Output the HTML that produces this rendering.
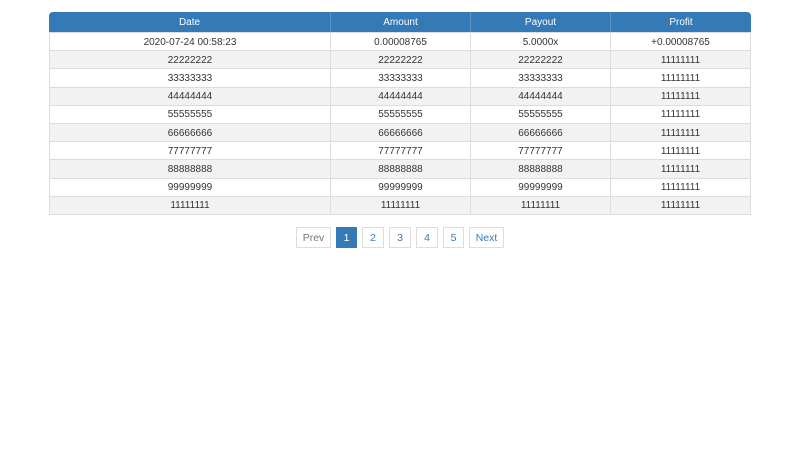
<!DOCTYPE html>
<html><head><style>
body{margin:0;background:#fff;font-family:"Liberation Sans",sans-serif;font-size:10px;color:#333}
table{position:absolute;left:49px;top:12px;width:702px;border-collapse:separate;border-spacing:0;table-layout:fixed}
th{background:#337ab7;color:#fff;font-weight:normal;height:20px;padding:1px 0 0;box-sizing:border-box;border-left:1px solid #5b93c5}
th:first-child{border-left:none;border-top-left-radius:4px}
th:last-child{border-top-right-radius:4px}
td{height:16.2px;padding:1px 0 0;text-align:center;border-top:1px solid #ddd;border-left:1px solid #ddd}
td:last-child{border-right:1px solid #ddd}
tr:last-child td{border-bottom:1px solid #ddd}
tbody tr:nth-child(even) td{background:#f2f2f2}
.p{position:absolute;top:227px;height:21px;box-sizing:border-box;border:1px solid #ddd;color:#337ab7;font-size:10.5px;line-height:20px;text-align:center}
</style></head><body>
<table>
<colgroup><col style="width:281px"><col style="width:140px"><col style="width:140px"><col style="width:141px"></colgroup>
<thead><tr><th>Date</th><th>Amount</th><th>Payout</th><th>Profit</th></tr></thead>
<tbody>
<tr><td>2020-07-24 00:58:23</td><td>0.00008765</td><td>5.0000x</td><td>+0.00008765</td></tr>
<tr><td>22222222</td><td>22222222</td><td>22222222</td><td>11111111</td></tr>
<tr><td>33333333</td><td>33333333</td><td>33333333</td><td>11111111</td></tr>
<tr><td>44444444</td><td>44444444</td><td>44444444</td><td>11111111</td></tr>
<tr><td>55555555</td><td>55555555</td><td>55555555</td><td>11111111</td></tr>
<tr><td>66666666</td><td>66666666</td><td>66666666</td><td>11111111</td></tr>
<tr><td>77777777</td><td>77777777</td><td>77777777</td><td>11111111</td></tr>
<tr><td>88888888</td><td>88888888</td><td>88888888</td><td>11111111</td></tr>
<tr><td>99999999</td><td>99999999</td><td>99999999</td><td>11111111</td></tr>
<tr><td>11111111</td><td>11111111</td><td>11111111</td><td>11111111</td></tr>
</tbody></table>
<div class="p" style="left:296px;width:35px;color:#777">Prev</div>
<div class="p" style="left:336px;width:21px;background:#337ab7;border-color:#337ab7;color:#fff">1</div>
<div class="p" style="left:362px;width:22px">2</div>
<div class="p" style="left:389px;width:22px">3</div>
<div class="p" style="left:416px;width:22px">4</div>
<div class="p" style="left:443px;width:21px">5</div>
<div class="p" style="left:469px;width:35px">Next</div>
</body></html>
